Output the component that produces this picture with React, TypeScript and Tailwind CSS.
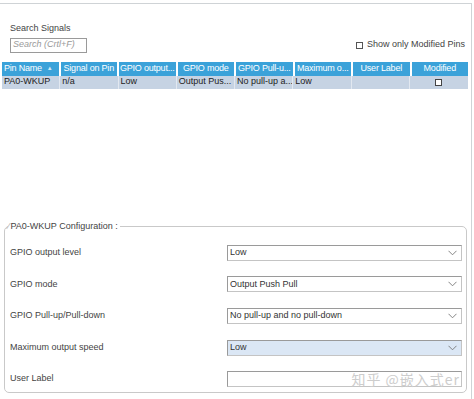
const columns = ["Pin Name", "Signal on Pin", "GPIO output...", "GPIO mode", "GPIO Pull-u...", "Maximum o...", "User Label", "Modified"];
const row = ["PA0-WKUP", "n/a", "Low", "Output Pus...", "No pull-up a...", "Low", "", ""];

const config = [
  { label: "GPIO output level", value: "Low" },
  { label: "GPIO mode", value: "Output Push Pull" },
  { label: "GPIO Pull-up/Pull-down", value: "No pull-up and no pull-down" },
  { label: "Maximum output speed", value: "Low", active: true },
];

function Select({ value, active }: { value: string; active?: boolean }) {
  return (
    <div
      className={`w-[235px] h-[16px] flex items-center justify-between border border-[#9a9a9a] border-b-[#c4c4c4] border-r-[#c4c4c4] pl-[2px] pr-[4px] ${active ? "bg-[#dbe7f5]" : "bg-white"}`}
    >
      <span className="text-[9px] text-[#333]">{value}</span>
      <svg width="9" height="6" viewBox="0 0 9 6" className="text-[#777]">
        <path d="M0.5 0.8 L4.5 4.8 L8.5 0.8" fill="none" stroke="currentColor" strokeWidth="0.9" />
      </svg>
    </div>
  );
}

export default function App() {
  return (
    <div className="w-[474px] h-[399px] bg-white pt-[3px] overflow-hidden relative" style={{ fontFamily: '"Liberation Sans", Arial, sans-serif' }}>
      <div className="w-[472px] h-[396px] border-t border-r border-[#cfd3d6] flex flex-col">
        {/* search bar */}
        <div className="pl-[10px] pt-[18px] text-[9px] text-[#444]">Search Signals</div>
        <div className="flex items-center justify-between pl-[10px] pr-[6px] mt-[2px]">
          <div className="w-[77px] h-[15px] border border-[#9a9a9a] flex items-center pl-[2px]">
            <span className="text-[9px] italic text-[#9a9a9a]">Search (Crtl+F)</span>
          </div>
          <label className="flex items-center gap-[4px] text-[9px] text-[#444]">
            <span className="w-[7px] h-[7px] border border-[#555]" />
            Show only Modified Pins
          </label>
        </div>

        {/* pin table */}
        <div className="mt-[9px] ml-[2px] w-[466px] grid grid-cols-8 gap-x-[2px]">
          {columns.map((c, i) => (
            <div
              key={c}
              className={`h-[14px] bg-[#3ba2d9] text-white text-[9px] tracking-[-0.2px] flex items-center relative whitespace-nowrap overflow-hidden ${i === 0 ? "pl-[2px]" : "justify-center"}`}
            >
              {c}
              {i === 0 && <span className="absolute right-[6px] top-[2px] text-[6px] text-[#cfe8f6]">▲</span>}
            </div>
          ))}
        </div>
        <div className="ml-[2px] w-[466px] grid grid-cols-8 bg-[#c6d3e3]">
          {row.map((v, i) => (
            <div
              key={i}
              className={`h-[13px] text-[9px] text-[#222] flex items-center whitespace-nowrap overflow-hidden border-r border-[#e2e8f0] ${i === 7 ? "justify-center border-r-0" : "pl-[2px]"}`}
            >
              {i === 7 ? <span className="w-[7px] h-[7px] border border-[#444] bg-white" /> : v}
            </div>
          ))}
        </div>

        {/* configuration */}
        <fieldset className="mt-[131px] ml-[4px] w-[463px] h-[173px] border border-[#c9c9c9] rounded-[5px] pl-[5px] pr-[4px] pt-[4px]">
          <legend className="text-[9px] text-[#444] ml-[-2px] pr-[2px]">
            <span className="text-[#aaa] mr-[1px]">⁄</span>PA0-WKUP Configuration :
          </legend>
          {config.map((c) => (
            <div key={c.label} className="h-[31.6px] flex items-center justify-between">
              <span className="text-[9px] text-[#444]">{c.label}</span>
              <Select value={c.value} active={c.active} />
            </div>
          ))}
          <div className="h-[31.6px] flex items-center justify-between relative">
            <span className="text-[9px] text-[#444]">User Label</span>
            <div className="w-[235px] h-[16px] border border-[#9a9a9a] border-b-[#c4c4c4] border-r-[#c4c4c4] bg-white" />
            <span
              className="absolute right-[2px] top-[6px] text-[14px] text-[#cdcdcd] tracking-[1px]"
              style={{ fontFamily: '"Noto Sans CJK SC", sans-serif' }}
            >
              知乎 @嵌入式er
            </span>
          </div>
        </fieldset>
      </div>
    </div>
  );
}
